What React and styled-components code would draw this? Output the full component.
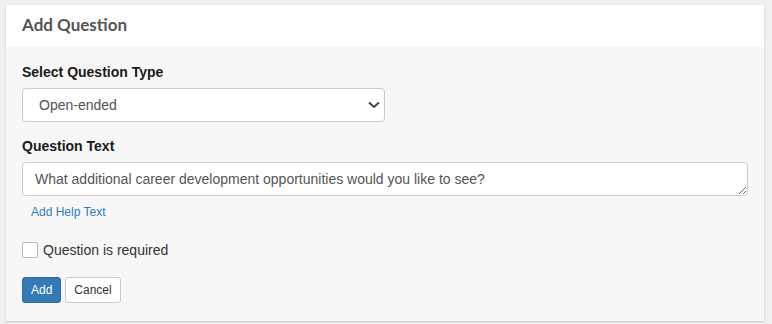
import React, { useState } from 'react';
import styled, { createGlobalStyle } from 'styled-components';

const GlobalStyle = createGlobalStyle`
  html, body {
    margin: 0;
    padding: 0;
    background: #eff0f2;
  }
  body {
    font-family: "Liberation Sans", Arial, sans-serif;
    color: #333;
  }
  * {
    box-sizing: border-box;
  }
`;

const Page = styled.div`
  padding: 5px 8px 3px 6px;
`;

const Card = styled.div`
  background: #f7f7f7;
  box-shadow: 0 1px 2px rgba(0, 0, 0, 0.18);
`;

const CardHeader = styled.div`
  height: 42px;
  background: #fff;
  display: flex;
  align-items: center;
  padding: 0 16px 3px;
`;

const Title = styled.h3`
  margin: 0;
  font-family: Lato, "Liberation Sans", sans-serif;
  font-weight: 700;
  font-size: 17px;
  color: #555;
`;

const CardBody = styled.div`
  padding: 17px 16px 18px;
`;

const Field = styled.div`
  margin-bottom: ${(props) => props.gap || 15}px;
`;

const Label = styled.label`
  display: block;
  font-weight: 700;
  font-size: 14px;
  line-height: 16px;
  color: #1a1a1a;
  margin-bottom: 8px;
`;

const SelectWrap = styled.div`
  position: relative;
  width: 363px;
`;

const Select = styled.select`
  appearance: none;
  width: 100%;
  height: 34px;
  padding: 0 12px 0 16px;
  border: 1px solid #ccc;
  border-radius: 4px;
  background: #fff;
  font-family: "Liberation Sans", Arial, sans-serif;
  font-size: 14px;
  color: #555;
  outline: none;
`;

const Chevron = styled.svg`
  position: absolute;
  right: 4px;
  top: 12px;
  pointer-events: none;
`;

const TextArea = styled.textarea`
  display: block;
  width: 726px;
  height: 34px;
  padding: 7px 12px;
  border: 1px solid #ccc;
  border-radius: 4px;
  background: #fff;
  font-family: "Liberation Sans", Arial, sans-serif;
  font-size: 14px;
  line-height: 18px;
  color: #555;
  resize: vertical;
  outline: none;
  overflow: hidden;
`;

const HelpLink = styled.a`
  display: inline-block;
  margin: 9px 0 0 9px;
  font-size: 12px;
  color: #337ab7;
  text-decoration: none;
  cursor: pointer;
`;

const CheckRow = styled.label`
  display: flex;
  align-items: center;
  gap: 5px;
  font-size: 14px;
  color: #333;
  margin-bottom: 19px;
`;

const Box = styled.input`
  appearance: none;
  width: 16px;
  height: 16px;
  margin: 0;
  border: 1px solid #bbb;
  border-radius: 2px;
  background: #fff;
`;

const Actions = styled.div`
  display: flex;
  gap: 4px;
`;

const Button = styled.button`
  height: 26px;
  padding: 0 8px;
  border-radius: 3px;
  font-family: "Liberation Sans", Arial, sans-serif;
  font-size: 12px;
  cursor: pointer;
  border: 1px solid ${(props) => (props.primary ? '#2e6da4' : '#ccc')};
  background: ${(props) => (props.primary ? '#337ab7' : '#fff')};
  color: ${(props) => (props.primary ? '#fff' : '#333')};
`;

const App = () => {
  const [type, setType] = useState('open');
  const [text, setText] = useState('What additional career development opportunities would you like to see?');

  return (
    <Page>
      <GlobalStyle />
      <Card>
        <CardHeader>
          <Title>Add Question</Title>
        </CardHeader>
        <CardBody>
          <Field gap={16}>
            <Label>Select Question Type</Label>
            <SelectWrap>
              <Select value={type} onChange={(e) => setType(e.target.value)}>
                <option value="open">Open-ended</option>
                <option value="multi">Multiple choice</option>
                <option value="rating">Rating</option>
              </Select>
              <Chevron width="14" height="10" viewBox="0 0 14 10">
                <path d="M2 2.5 L7 7 L12 2.5" fill="none" stroke="#444" strokeWidth="2" />
              </Chevron>
            </SelectWrap>
          </Field>
          <Field gap={22}>
            <Label>Question Text</Label>
            <TextArea value={text} onChange={(e) => setText(e.target.value)} rows={1} />
            <HelpLink>Add Help Text</HelpLink>
          </Field>
          <CheckRow>
            <Box type="checkbox" />
            Question is required
          </CheckRow>
          <Actions>
            <Button primary>Add</Button>
            <Button>Cancel</Button>
          </Actions>
        </CardBody>
      </Card>
    </Page>
  );
};

export default App;
